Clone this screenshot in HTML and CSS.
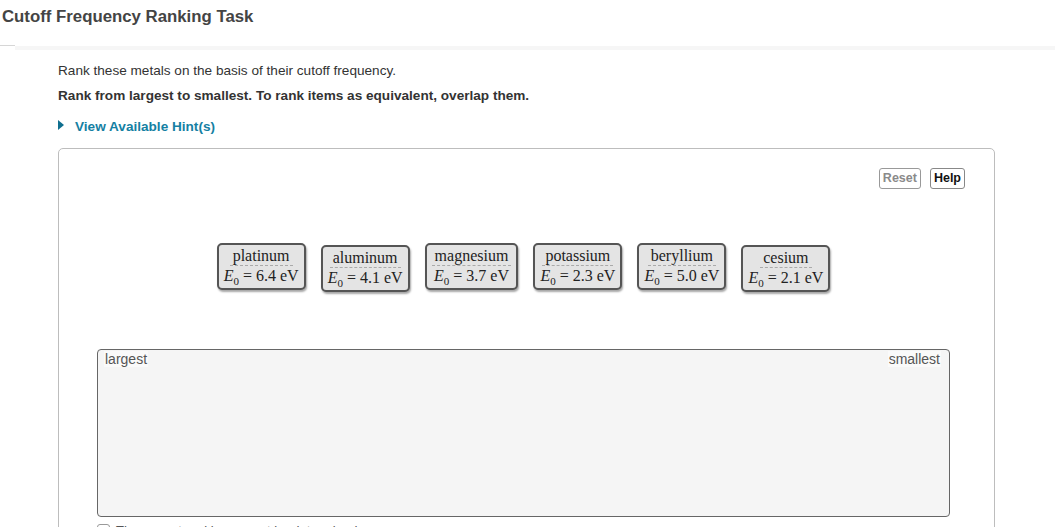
FILE: index.html
```html
<!DOCTYPE html>
<html lang="en">
<head>
  <meta charset="UTF-8">
  <title>Cutoff Frequency Ranking Task</title>
  <link rel="stylesheet" href="styles.css">
</head>
<body>

  <!-- Title -->
  <header class="task-header">
    <h1>Cutoff Frequency Ranking Task</h1>
  </header>
  <div class="rule">
    <div class="rule-edge"></div>
    <div class="rule-band"></div>
  </div>

  <main class="task">
    <p class="prompt">Rank these metals on the basis of their cutoff frequency.</p>
    <p class="instructions">Rank from largest to smallest. To rank items as equivalent, overlap them.</p>
    <a class="hint-toggle" href="#"><span class="caret"></span>View Available Hint(s)</a>

    <div class="ranking-panel">
      <div class="panel-tools">
        <button class="tool-btn reset">Reset</button>
        <button class="tool-btn">Help</button>
      </div>

      <div class="chip-pool">
        <div class="chip">
          <span class="chip-name">platinum</span>
          <span class="chip-eq"><i>E</i><sub>0</sub><span class="eq">=</span>6.4 eV</span>
        </div>
        <div class="chip low">
          <span class="chip-name">aluminum</span>
          <span class="chip-eq"><i>E</i><sub>0</sub><span class="eq">=</span>4.1 eV</span>
        </div>
        <div class="chip">
          <span class="chip-name">magnesium</span>
          <span class="chip-eq"><i>E</i><sub>0</sub><span class="eq">=</span>3.7 eV</span>
        </div>
        <div class="chip">
          <span class="chip-name">potassium</span>
          <span class="chip-eq"><i>E</i><sub>0</sub><span class="eq">=</span>2.3 eV</span>
        </div>
        <div class="chip">
          <span class="chip-name">beryllium</span>
          <span class="chip-eq"><i>E</i><sub>0</sub><span class="eq">=</span>5.0 eV</span>
        </div>
        <div class="chip low">
          <span class="chip-name">cesium</span>
          <span class="chip-eq"><i>E</i><sub>0</sub><span class="eq">=</span>2.1 eV</span>
        </div>
      </div>

      <div class="drop-zone">
        <div class="zone-labels">
          <span class="zone-label">largest</span>
          <span class="zone-label">smallest</span>
        </div>
      </div>

      <label class="undetermined">
        <span class="check"></span>
        The correct ranking cannot be determined.
      </label>
    </div>
  </main>

</body>
</html>
```

FILE: styles.css
```css
* {
  margin: 0;
  padding: 0;
  box-sizing: border-box;
}

body {
  font-family: "Liberation Sans", Arial, sans-serif;
  color: #333;
  background-color: #fff;
  overflow: hidden;
}

/* Header */
.task-header {
  padding: 7px 2px 0;
  height: 45px;
}

.task-header h1 {
  font-size: 16.8px;
  font-weight: bold;
  color: #444;
}

.rule {
  display: flex;
}

.rule-edge {
  width: 15px;
  border-top: 1px solid #d6d6d6;
}

.rule-band {
  flex: 1;
  height: 4px;
  margin-top: 1px;
  background-color: #f6f6f6;
}

/* Task body */
.task {
  padding: 0 60px 0 58px;
}

.prompt {
  font-size: 13.6px;
  margin-top: 13px;
}

.instructions {
  font-size: 13.6px;
  font-weight: bold;
  margin-top: 10px;
}

.hint-toggle {
  display: inline-flex;
  align-items: center;
  margin-top: 16px;
  font-size: 13.6px;
  font-weight: bold;
  color: #1580a3;
  text-decoration: none;
}

.caret {
  width: 0;
  height: 0;
  border-top: 5px solid transparent;
  border-bottom: 5px solid transparent;
  border-left: 6px solid #0f6f8f;
  margin: 0 11px 0 0;
  position: relative;
  top: -2px;
}

/* Ranking panel */
.ranking-panel {
  margin-top: 12px;
  border: 1px solid #bdbdbd;
  border-radius: 5px;
  padding: 19px 0 0 38px;
  height: 420px;
}

.panel-tools {
  display: flex;
  justify-content: flex-end;
  gap: 9px;
  padding-right: 29px;
}

.tool-btn {
  font-family: "Liberation Sans", Arial, sans-serif;
  font-size: 12.5px;
  font-weight: bold;
  color: #111;
  background: #fff;
  border: 1px solid #888;
  border-radius: 3px;
  padding: 2px 3px;
  height: 21px;
}

.tool-btn.reset {
  color: #8a8a8a;
  border-color: #999;
}

.chip-pool {
  display: flex;
  justify-content: center;
  align-items: flex-start;
  gap: 15px;
  margin-top: 54px;
  padding-right: 44px;
}

.chip {
  display: flex;
  flex-direction: column;
  align-items: center;
  min-width: 89px;
  padding: 2px 5px 4px;
  background-color: #e4e4e4;
  border: 2px solid #555;
  border-radius: 5px;
  box-shadow: 1px 2px 2px rgba(0, 0, 0, 0.35);
  font-family: "Liberation Serif", "Times New Roman", serif;
  font-size: 16px;
  color: #222;
  line-height: 17px;
}

.chip.low {
  margin-top: 2px;
}

.chip-name {
  padding: 0 3px 1px;
  border-bottom: 1px dashed #aaa;
}

.chip-eq {
  white-space: nowrap;
  padding-top: 1px;
}

.chip-eq sub {
  font-size: 11px;
  line-height: 0;
}

.chip-eq .eq {
  margin: 0 4px;
}

/* Drop zone */
.drop-zone {
  margin-top: 57px;
  margin-right: 44px;
  height: 168px;
  border: 1px solid #666;
  border-radius: 4px;
  background-color: #f5f5f5;
}

.zone-labels {
  display: flex;
  justify-content: space-between;
  padding: 1px 8px 0 6px;
}

.zone-label {
  font-size: 14px;
  color: #555;
  background-color: #fafafa;
  padding: 0 1px;
}

.undetermined {
  display: flex;
  align-items: center;
  gap: 6px;
  margin-top: 6px;
  font-size: 13px;
  color: #555;
}

.check {
  width: 13px;
  height: 13px;
  border: 1px solid #999;
  border-radius: 3px;
  background: #fff;
}
```
